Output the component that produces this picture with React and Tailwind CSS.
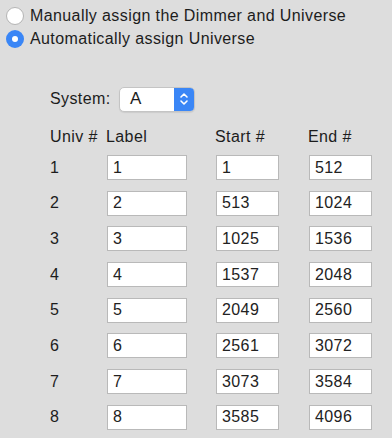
import React from 'react';

const rows = [
  ['1', '1', '1', '512'],
  ['2', '2', '513', '1024'],
  ['3', '3', '1025', '1536'],
  ['4', '4', '1537', '2048'],
  ['5', '5', '2049', '2560'],
  ['6', '6', '2561', '3072'],
  ['7', '7', '3073', '3584'],
  ['8', '8', '3585', '4096'],
];

const Field = ({ value, width }) => (
  <div
    className={`${width} h-[25px] bg-white border border-[#b9b9b9] flex items-center pl-[5px] text-[#222]`}
  >
    {value}
  </div>
);

const App = () => {
  return (
    <div
      className="w-[392px] h-[438px] bg-[#dddddd] text-[#1c1c1c] text-[16px] tracking-[0.4px] overflow-hidden"
      style={{ fontFamily: '"Liberation Sans", Arial, sans-serif' }}
    >
      <div className="pt-[7px] pl-[6px] flex flex-col gap-[5px]">
        <div className="flex items-center h-[18px]">
          <span className="w-[18px] h-[18px] rounded-full bg-white border border-[#b4b4b4]" />
          <span className="ml-[6px]">Manually assign the Dimmer and Universe</span>
        </div>
        <div className="flex items-center h-[18px]">
          <span className="w-[18px] h-[18px] rounded-full bg-[#3a86f6] flex items-center justify-center">
            <span className="w-[6px] h-[6px] rounded-full bg-white" />
          </span>
          <span className="ml-[6px]">Automatically assign Universe</span>
        </div>
      </div>

      <div className="pl-[50px]">
        <div className="mt-[38px] flex items-center h-[26px]">
          <span className="w-[69px]">System:</span>
          <div className="w-[76px] h-[25px] flex rounded-[5px] bg-white border border-[#c4c4c4] shadow-[0_1px_1px_rgba(0,0,0,0.08)] overflow-hidden">
            <span className="flex-1 flex items-center pl-[10px] text-[17px]">A</span>
            <span className="w-[20px] bg-[#3a86f6] flex items-center justify-center">
              <svg width="10" height="16" viewBox="0 0 10 16" fill="none" stroke="white" strokeWidth="1.6" strokeLinecap="round" strokeLinejoin="round">
                <path d="M2 6 L5 3 L8 6" />
                <path d="M2 10 L5 13 L8 10" />
              </svg>
            </span>
          </div>
        </div>

        <div className="mt-[16px] flex items-center h-[18px]">
          <span className="w-[56px]">Univ #</span>
          <span className="w-[109px]">Label</span>
          <span className="w-[93px]">Start #</span>
          <span>End #</span>
        </div>

        <div className="mt-[9px] flex flex-col gap-[10.7px]">
          {rows.map(([u, label, start, end]) => (
            <div key={u} className="flex items-center">
              <span className="w-[57px]">{u}</span>
              <Field value={label} width="w-[80px]" />
              <div className="ml-[29px]">
                <Field value={start} width="w-[63px]" />
              </div>
              <div className="ml-[30px]">
                <Field value={end} width="w-[63px]" />
              </div>
            </div>
          ))}
        </div>
      </div>
    </div>
  );
};

export default App;
